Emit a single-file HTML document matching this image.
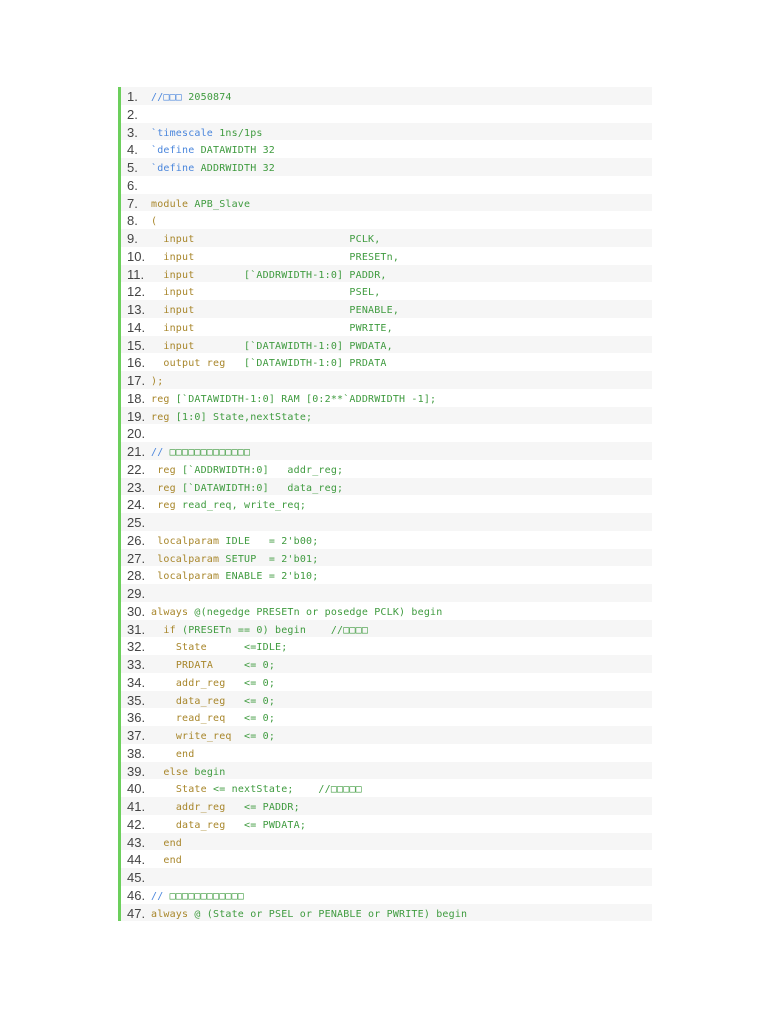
<!DOCTYPE html>
<html><head><meta charset="utf-8"><style>
body{margin:0;background:#fff;width:768px;height:1024px;position:relative;overflow:hidden}
.box{position:absolute;left:118px;top:87px;width:531px;border-left:3px solid #6ccf5c}
.r{height:17.76px;position:relative;white-space:pre}
.r:nth-child(odd){background:#f6f6f6}
.n{position:absolute;left:6px;top:1px;font:13px/17.76px "Liberation Sans","DejaVu Sans",sans-serif;color:#444}
.c{position:absolute;left:30px;top:2px;font:10px/17.76px "DejaVu Sans Mono","Liberation Mono",monospace;color:#3f9b3f;letter-spacing:0.18px}
.k{color:#a8862a}.b{color:#4a86dc}
</style></head><body><div class="box">
<div class="r"><span class="n">1.</span><span class="c"><span class="b">//□□□</span> 2050874</span></div>
<div class="r"><span class="n">2.</span><span class="c"></span></div>
<div class="r"><span class="n">3.</span><span class="c"><span class="b">`timescale</span> 1ns/1ps</span></div>
<div class="r"><span class="n">4.</span><span class="c"><span class="b">`define</span> DATAWIDTH 32</span></div>
<div class="r"><span class="n">5.</span><span class="c"><span class="b">`define</span> ADDRWIDTH 32</span></div>
<div class="r"><span class="n">6.</span><span class="c"></span></div>
<div class="r"><span class="n">7.</span><span class="c"><span class="k">module</span> APB_Slave</span></div>
<div class="r"><span class="n">8.</span><span class="c"><span class="k">(</span></span></div>
<div class="r"><span class="n">9.</span><span class="c">  <span class="k">input</span>                         PCLK,</span></div>
<div class="r"><span class="n">10.</span><span class="c">  <span class="k">input</span>                         PRESETn,</span></div>
<div class="r"><span class="n">11.</span><span class="c">  <span class="k">input</span>        [`ADDRWIDTH-1:0] PADDR,</span></div>
<div class="r"><span class="n">12.</span><span class="c">  <span class="k">input</span>                         PSEL,</span></div>
<div class="r"><span class="n">13.</span><span class="c">  <span class="k">input</span>                         PENABLE,</span></div>
<div class="r"><span class="n">14.</span><span class="c">  <span class="k">input</span>                         PWRITE,</span></div>
<div class="r"><span class="n">15.</span><span class="c">  <span class="k">input</span>        [`DATAWIDTH-1:0] PWDATA,</span></div>
<div class="r"><span class="n">16.</span><span class="c">  <span class="k">output reg</span>   [`DATAWIDTH-1:0] PRDATA</span></div>
<div class="r"><span class="n">17.</span><span class="c"><span class="k">);</span></span></div>
<div class="r"><span class="n">18.</span><span class="c"><span class="k">reg</span> [`DATAWIDTH-1:0] RAM [0:2**`ADDRWIDTH -1];</span></div>
<div class="r"><span class="n">19.</span><span class="c"><span class="k">reg</span> [1:0] State,nextState;</span></div>
<div class="r"><span class="n">20.</span><span class="c"></span></div>
<div class="r"><span class="n">21.</span><span class="c"><span class="b">//</span> □□□□□□□□□□□□□</span></div>
<div class="r"><span class="n">22.</span><span class="c"> <span class="k">reg</span> [`ADDRWIDTH:0]   addr_reg;</span></div>
<div class="r"><span class="n">23.</span><span class="c"> <span class="k">reg</span> [`DATAWIDTH:0]   data_reg;</span></div>
<div class="r"><span class="n">24.</span><span class="c"> <span class="k">reg</span> read_req, write_req;</span></div>
<div class="r"><span class="n">25.</span><span class="c"></span></div>
<div class="r"><span class="n">26.</span><span class="c"> <span class="k">localparam</span> IDLE   = 2'b00;</span></div>
<div class="r"><span class="n">27.</span><span class="c"> <span class="k">localparam</span> SETUP  = 2'b01;</span></div>
<div class="r"><span class="n">28.</span><span class="c"> <span class="k">localparam</span> ENABLE = 2'b10;</span></div>
<div class="r"><span class="n">29.</span><span class="c"></span></div>
<div class="r"><span class="n">30.</span><span class="c"><span class="k">always</span> @(negedge PRESETn or posedge PCLK) begin</span></div>
<div class="r"><span class="n">31.</span><span class="c">  <span class="k">if</span> (PRESETn == 0) begin    //□□□□</span></div>
<div class="r"><span class="n">32.</span><span class="c">    <span class="k">State</span>      &lt;=IDLE;</span></div>
<div class="r"><span class="n">33.</span><span class="c">    <span class="k">PRDATA</span>     &lt;= 0;</span></div>
<div class="r"><span class="n">34.</span><span class="c">    <span class="k">addr_reg</span>   &lt;= 0;</span></div>
<div class="r"><span class="n">35.</span><span class="c">    <span class="k">data_reg</span>   &lt;= 0;</span></div>
<div class="r"><span class="n">36.</span><span class="c">    <span class="k">read_req</span>   &lt;= 0;</span></div>
<div class="r"><span class="n">37.</span><span class="c">    <span class="k">write_req</span>  &lt;= 0;</span></div>
<div class="r"><span class="n">38.</span><span class="c">    <span class="k">end</span></span></div>
<div class="r"><span class="n">39.</span><span class="c">  <span class="k">else</span> begin</span></div>
<div class="r"><span class="n">40.</span><span class="c">    <span class="k">State</span> &lt;= nextState;    //□□□□□</span></div>
<div class="r"><span class="n">41.</span><span class="c">    <span class="k">addr_reg</span>   &lt;= PADDR;</span></div>
<div class="r"><span class="n">42.</span><span class="c">    <span class="k">data_reg</span>   &lt;= PWDATA;</span></div>
<div class="r"><span class="n">43.</span><span class="c">  <span class="k">end</span></span></div>
<div class="r"><span class="n">44.</span><span class="c">  <span class="k">end</span></span></div>
<div class="r"><span class="n">45.</span><span class="c"></span></div>
<div class="r"><span class="n">46.</span><span class="c"><span class="b">//</span> □□□□□□□□□□□□</span></div>
<div class="r"><span class="n">47.</span><span class="c"><span class="k">always</span> @ (State or PSEL or PENABLE or PWRITE) begin</span></div>
</div></body></html>
